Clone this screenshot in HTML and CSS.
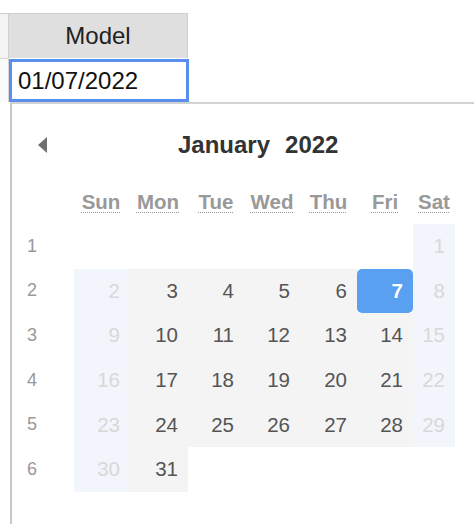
FILE: index.html
```html
<!DOCTYPE html>
<html>
<head>
<meta charset="utf-8">
<link rel="stylesheet" href="styles.css">
</head>
<body>
<div class="sheet">
  <div class="row head">
    <div class="corner"></div>
    <div class="colhead">Model</div>
  </div>
  <div class="row data">
    <div class="rowhead"></div>
    <div class="editor">01/07/2022</div>
  </div>
  <div class="popup">
    <div class="nav">
      <span class="prev"></span>
      <div class="title"><span>January</span><span>2022</span></div>
    </div>
    <div class="cal">
      <div class="wk"></div>
      <div class="dh"><abbr>Sun</abbr></div>
      <div class="dh"><abbr>Mon</abbr></div>
      <div class="dh"><abbr>Tue</abbr></div>
      <div class="dh"><abbr>Wed</abbr></div>
      <div class="dh"><abbr>Thu</abbr></div>
      <div class="dh"><abbr>Fri</abbr></div>
      <div class="dh"><abbr>Sat</abbr></div>

      <div class="wn">1</div>
      <div></div><div></div><div></div><div></div><div></div><div></div>
      <div class="d off">1</div>

      <div class="wn">2</div>
      <div class="d off sun">2</div>
      <div class="d">3</div>
      <div class="d">4</div>
      <div class="d">5</div>
      <div class="d">6</div>
      <div class="d sel">7</div>
      <div class="d off">8</div>

      <div class="wn">3</div>
      <div class="d off sun">9</div>
      <div class="d">10</div>
      <div class="d">11</div>
      <div class="d">12</div>
      <div class="d">13</div>
      <div class="d">14</div>
      <div class="d off">15</div>

      <div class="wn">4</div>
      <div class="d off sun">16</div>
      <div class="d">17</div>
      <div class="d">18</div>
      <div class="d">19</div>
      <div class="d">20</div>
      <div class="d">21</div>
      <div class="d off">22</div>

      <div class="wn">5</div>
      <div class="d off sun">23</div>
      <div class="d">24</div>
      <div class="d">25</div>
      <div class="d">26</div>
      <div class="d">27</div>
      <div class="d">28</div>
      <div class="d off">29</div>

      <div class="wn">6</div>
      <div class="d off sun">30</div>
      <div class="d">31</div>
    </div>
  </div>
</div>
</body>
</html>
```

FILE: styles.css
```css
html, body {
  margin: 0;
  padding: 0;
  background: #ffffff;
}
body {
  font-family: "Liberation Sans", Arial, sans-serif;
  width: 474px;
  height: 524px;
  overflow: hidden;
}
.sheet {
  padding-top: 13px;
}
.row {
  display: flex;
}
.head {
  height: 45px;
}
.corner {
  width: 8px;
  background: #f3f3f3;
  border-top: 1px solid #cfcfcf;
  border-right: 1px solid #cfcfcf;
}
.colhead {
  width: 178px;
  background: #dfdfdf;
  border-top: 1px solid #cfcfcf;
  border-right: 1px solid #cfcfcf;
  font-size: 24px;
  color: #222;
  display: flex;
  align-items: center;
  justify-content: center;
}
.data {
  height: 44px;
}
.rowhead {
  width: 8px;
  border-top: 1px solid #d6d6d6;
  border-right: 1px solid #d6d6d6;
  background: #fafafa;
}
.editor {
  box-sizing: border-box;
  width: 180px;
  height: 43px;
  margin-top: 1px;
  border: 3px solid #5b8fee;
  background: #fff;
  font-size: 24px;
  color: #111;
  padding-left: 6px;
  display: flex;
  align-items: center;
}
.popup {
  box-sizing: border-box;
  margin-left: 10px;
  height: 422px;
  border-top: 2px solid #d2d2d2;
  border-left: 2px solid #c8c8c8;
  background: #fff;
}
.nav {
  height: 82px;
  display: flex;
  align-items: center;
}
.prev {
  width: 0;
  height: 0;
  margin-left: 26px;
  border-top: 8px solid transparent;
  border-bottom: 8px solid transparent;
  border-right: 9px solid #6f6f6f;
}
.title {
  margin-left: 131px;
  font-size: 24px;
  font-weight: bold;
  color: #333;
  line-height: 1;
  display: flex;
  gap: 15px;
}
.cal {
  display: grid;
  grid-template-columns: 62px 54px 60px 56px 56px 57px 56px 42px;
  grid-template-rows: 38px;
  grid-auto-rows: 44.6px;
}
.dh {
  text-align: center;
  line-height: 32px;
  font-size: 20.5px;
  font-weight: bold;
  color: #999;
}
.dh abbr {
  text-decoration: underline dotted;
  text-decoration-thickness: 1px;
  text-underline-offset: 3px;
}
.wn {
  font-size: 18px;
  color: #999;
  padding-left: 15px;
  display: flex;
  align-items: center;
}
.d {
  font-size: 20.5px;
  color: #555;
  background: #f4f4f4;
  padding-right: 10px;
  display: flex;
  align-items: center;
  justify-content: flex-end;
}
.d.off {
  background: #f2f5fb;
  color: #d8d8d8;
}
.d.sun {
  padding-right: 8px;
}
.d.sel {
  background: #5aa0f0;
  color: #fff;
  font-weight: bold;
  border-radius: 5px;
}
```
